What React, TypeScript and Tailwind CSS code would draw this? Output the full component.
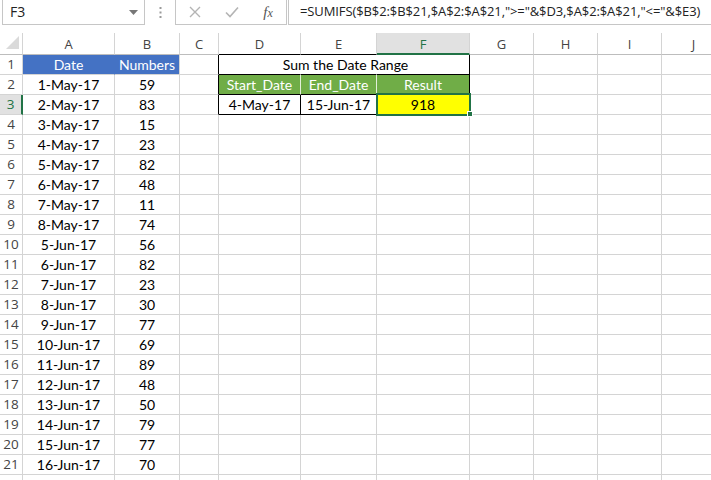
import React from "react";

const colW = ["w-[92px]", "w-[65px]", "w-[39px]", "w-[82px]", "w-[76px]", "w-[93px]", "w-[64px]", "w-[64px]", "w-[64px]", "w-[64px]"];
const letters = ["A", "B", "C", "D", "E", "F", "G", "H", "I", "J"];

const data: [string, string][] = [
  ["1-May-17", "59"],
  ["2-May-17", "83"],
  ["3-May-17", "15"],
  ["4-May-17", "23"],
  ["5-May-17", "82"],
  ["6-May-17", "48"],
  ["7-May-17", "11"],
  ["8-May-17", "74"],
  ["5-Jun-17", "56"],
  ["6-Jun-17", "82"],
  ["7-Jun-17", "23"],
  ["8-Jun-17", "30"],
  ["9-Jun-17", "77"],
  ["10-Jun-17", "69"],
  ["11-Jun-17", "89"],
  ["12-Jun-17", "48"],
  ["13-Jun-17", "50"],
  ["14-Jun-17", "79"],
  ["15-Jun-17", "77"],
  ["16-Jun-17", "70"],
];

type CellSpec = { text?: string; cls?: string };

function cellFor(row: number, col: number): CellSpec {
  if (row === 1) {
    if (col === 0) return { text: "Date", cls: "bg-[#4472c4] text-white border-r-[#4472c4]" };
    if (col === 1) return { text: "Numbers", cls: "bg-[#4472c4] text-white" };
    if (col === 2) return { cls: "border-r-black" };
    if (col === 3) return { text: "Sum the Date Range", cls: "border-r-transparent border-b-black" };
    if (col === 4) return { cls: "border-r-transparent border-b-black" };
    if (col === 5) return { cls: "border-r-black border-b-black" };
  }
  if (row === 2) {
    if (col === 2) return { cls: "border-r-black" };
    if (col === 3) return { text: "Start_Date", cls: "bg-[#70ad47] text-white border-r-[#e2efd9] border-b-black" };
    if (col === 4) return { text: "End_Date", cls: "bg-[#70ad47] text-white border-r-[#e2efd9] border-b-black" };
    if (col === 5) return { text: "Result", cls: "bg-[#70ad47] text-white border-r-black border-b-black" };
  }
  if (row === 3) {
    if (col === 2) return { cls: "border-r-black" };
    if (col === 3) return { text: "4-May-17", cls: "border-r-black border-b-black" };
    if (col === 4) return { text: "15-Jun-17", cls: "border-r-black border-b-black" };
    if (col === 5) return { text: "918", cls: "bg-[#ffff00] border-r-black border-b-black" };
  }
  if (row >= 2 && row <= 21) {
    if (col === 0) return { text: data[row - 2][0] };
    if (col === 1) return { text: data[row - 2][1] };
  }
  return {};
}

function TopBar() {
  return (
    <div className="h-[33px] flex items-start bg-white">
      <div className="ml-[2px] w-[143px] h-[25px] border border-t-0 border-[#c6c6c6] flex items-center justify-between pl-[7px] pr-[6px] text-[14px] text-[#222]" style={{ fontFamily: '"Open Sans", sans-serif' }}>
        <span className="leading-none">F3</span>
        <svg width="9" height="5" viewBox="0 0 9 5" className="mt-[1px]">
          <path d="M0 0 L9 0 L4.5 5 Z" fill="#777" />
        </svg>
      </div>
      <div className="w-[30px] h-[25px] flex items-center justify-center">
        <svg width="3" height="11" viewBox="0 0 3 11">
          <rect x="0.5" y="0" width="2" height="2" fill="#9a9a9a" />
          <rect x="0.5" y="4.5" width="2" height="2" fill="#9a9a9a" />
          <rect x="0.5" y="9" width="2" height="2" fill="#9a9a9a" />
        </svg>
      </div>
      <div className="w-[112px] h-[25px] border border-t-0 border-[#c6c6c6] flex items-center">
        <div className="w-[38px] flex justify-center">
          <svg width="12" height="12" viewBox="0 0 12 12">
            <path d="M1 1 L11 11 M11 1 L1 11" stroke="#b4b4b4" strokeWidth="1.4" />
          </svg>
        </div>
        <div className="w-[36px] flex justify-center">
          <svg width="14" height="12" viewBox="0 0 14 12">
            <path d="M1 6.5 L5 10.5 L13 1.5" stroke="#b4b4b4" strokeWidth="1.6" fill="none" />
          </svg>
        </div>
        <div className="w-[36px] flex justify-center">
          <span className="text-[15px] text-[#555] italic leading-none" style={{ fontFamily: '"Liberation Serif", serif' }}>
            f<span className="text-[12px]">x</span>
          </span>
        </div>
      </div>
      <div className="ml-[1px] flex-1 h-[25px] border border-t-0 border-r-0 border-[#c6c6c6] flex items-center pl-[11px] text-[13px] tracking-[-0.1px] text-[#222] whitespace-nowrap overflow-hidden" style={{ fontFamily: '"Open Sans", sans-serif' }}>
        =SUMIFS($B$2:$B$21,$A$2:$A$21,"&gt;="&amp;$D3,$A$2:$A$21,"&lt;="&amp;$E3)
      </div>
    </div>
  );
}

function HeaderRow() {
  return (
    <div className="flex h-[22px]" style={{ fontFamily: '"Open Sans", sans-serif' }}>
      <div className="w-[23px] shrink-0 border-r border-b border-[#d4d4d4] border-b-[#bdbdbd] relative">
        <svg width="13" height="13" viewBox="0 0 13 13" className="absolute left-[6px] top-[3px]">
          <path d="M13 0 L13 13 L0 13 Z" fill="#dadada" />
        </svg>
      </div>
      {letters.map((l, i) => {
        const sel = i === 5;
        const extra =
          sel
            ? "bg-[#e1e1e1] text-[#217346] border-b-2 border-b-[#217346]"
            : i === 3 || i === 4
            ? "border-b-black text-[#444]"
            : "border-b-[#bdbdbd] text-[#444]";
        return (
          <div
            key={l}
            className={`${colW[i]} shrink-0 border-r border-b border-r-[#d4d4d4] flex items-center justify-center text-[13px] leading-none ${extra}`}
          >
            <span className="mt-[2px]">{l}</span>
          </div>
        );
      })}
    </div>
  );
}

function DataRow({ row }: { row: number }) {
  const selRow = row === 3;
  return (
    <div className="flex h-[20px]">
      <div
        className={`w-[23px] shrink-0 border-b border-r flex items-center justify-center text-[13.5px] leading-none ${
          selRow ? "bg-[#e1e1e1] text-[#217346] border-r-2 border-r-[#217346] border-b-[#d4d4d4]" : "text-[#444] border-[#d4d4d4]"
        }`}
        style={{ fontFamily: '"Open Sans", sans-serif' }}
      >
        {row <= 21 ? row : ""}
      </div>
      {letters.map((l, i) => {
        const c = cellFor(row, i);
        return (
          <div
            key={l}
            className={`${colW[i]} shrink-0 border-r border-b border-[#d4d4d4] flex items-center justify-center text-[14px] leading-none whitespace-nowrap ${
              c.cls ?? "text-black"
            }`}
          >
            {c.text && <span className={i === 3 && row === 1 ? "relative left-[86px]" : ""}>{c.text}</span>}
          </div>
        );
      })}
    </div>
  );
}

export default function App() {
  const rows = Array.from({ length: 22 }, (_, i) => i + 1);
  return (
    <div className="w-[711px] h-[480px] overflow-hidden bg-white relative text-black" style={{ fontFamily: '"Lato", "Liberation Sans", sans-serif' }}>
      <TopBar />
      <HeaderRow />
      {rows.map((r) => (
        <DataRow key={r} row={r} />
      ))}
      <div className="absolute left-[376px] top-[93px] w-[95px] h-[23px] border-2 border-[#217346] pointer-events-none" />
      <div className="absolute left-[467px] top-[111px] w-[6px] h-[6px] bg-[#217346] border border-white pointer-events-none" />
    </div>
  );
}
